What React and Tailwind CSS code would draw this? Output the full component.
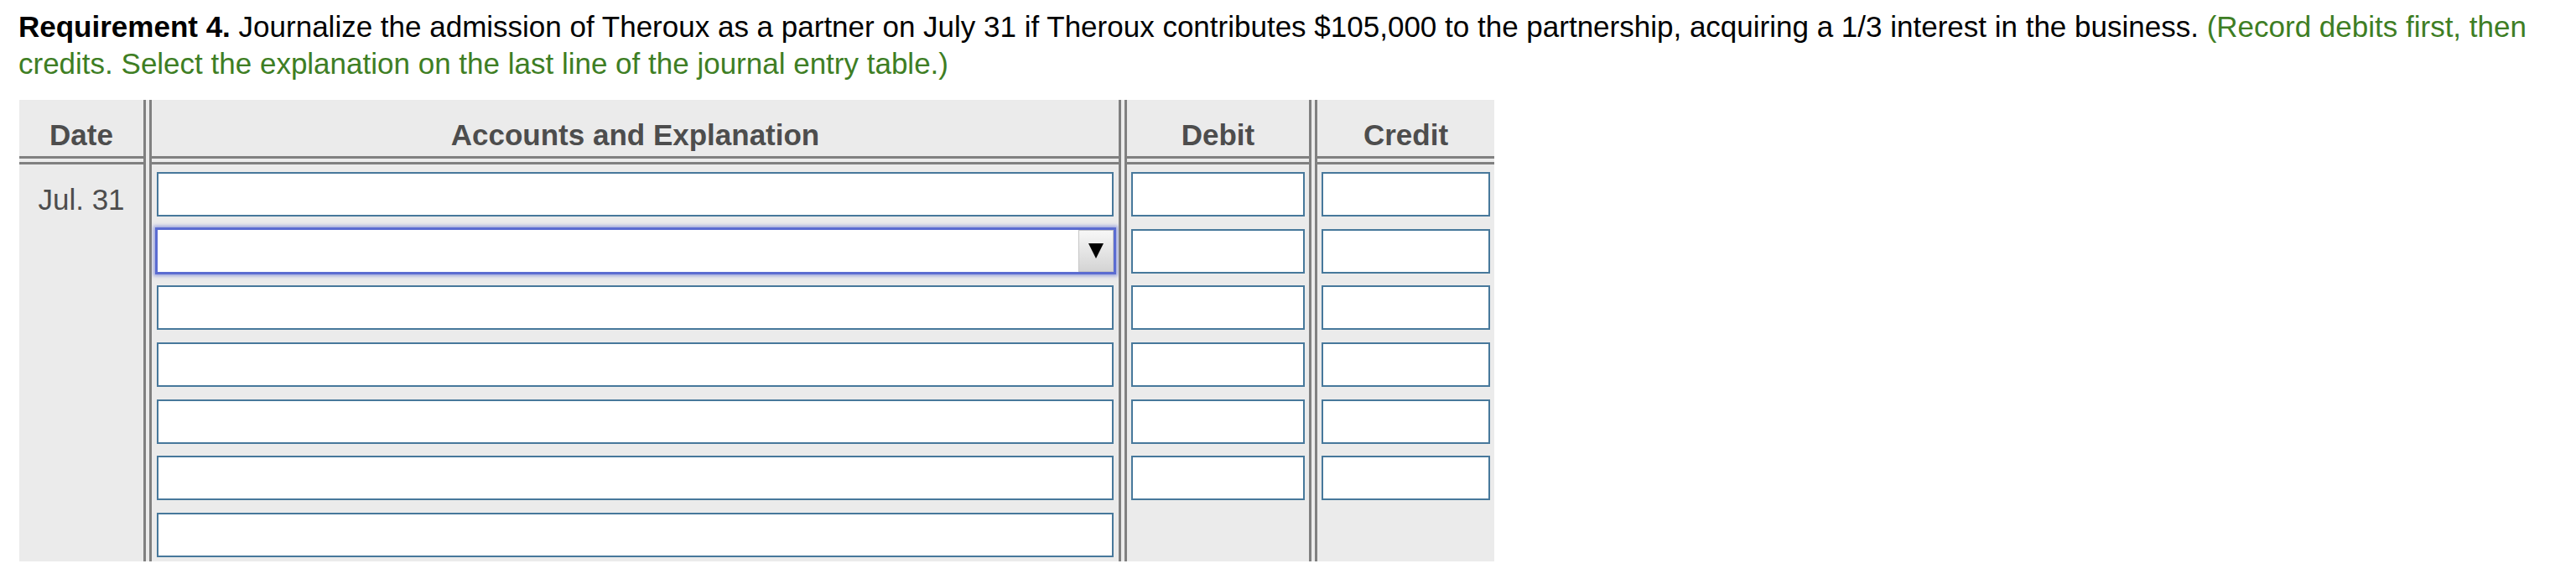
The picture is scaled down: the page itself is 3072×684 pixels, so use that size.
import { memo } from 'react';

/**
 * JournalEntry
 * Requirement prompt + journal entry table (date / accounts / debit / credit)
 */

const font = "font-['Liberation_Sans',Arial,Helvetica,sans-serif]";

// Double rule used under the header cells
const HeaderRule = () => (
  <div className="h-[10px] border-t-[3px] border-b-[3px] border-[#808080]" />
);

// Double vertical rule between columns
const ColumnRule = () => (
  <div className="flex w-[10px] shrink-0 self-stretch gap-[4px]">
    <div className="w-[3px] bg-[#808080]" />
    <div className="w-[3px] bg-[#808080]" />
  </div>
);

const HeaderCell = ({ children }) => (
  <div className="flex h-[67px] items-end justify-center pb-[6px] text-[35px] font-bold leading-[39px] text-[#4d4d4d]">
    {children}
  </div>
);

const TextBox = () => (
  <input
    type="text"
    defaultValue=""
    className="block h-[53px] w-full border-2 border-[#47789b] bg-white px-2 text-[30px] outline-none"
  />
);

// Account picker — focused state with the blue glow
const AccountSelect = () => (
  <div className="-mb-[1px] -ml-[2px] -mr-[3px] -mt-[2px] flex h-[56px] border-[3px] border-[#5b6cd1] bg-white shadow-[0_0_4px_2px_rgba(91,108,209,0.55)]">
    <div className="flex-1" />
    <div className="flex w-[42px] items-center justify-center border border-[#c6c6c6] bg-gradient-to-b from-[#f7f7f7] to-[#d4d4d4]">
      <svg width="18" height="18" viewBox="0 0 18 18">
        <polygon points="0,0 18,0 9,18" fill="#000" />
      </svg>
    </div>
  </div>
);

const App = memo(() => {
  const accountRows = [0, 1, 2, 3, 4, 5, 6];
  const amountRows = [0, 1, 2, 3, 4, 5];

  return (
    <div className={`min-h-[684px] w-[3072px] bg-white ${font}`}>
      {/* Prompt */}
      <p className="pl-[22px] pr-[16px] pt-[10px] text-[35px] leading-[44px] text-black">
        <span className="font-bold">Requirement 4.</span> Journalize the admission of Theroux as a partner on July 31 if
        Theroux contributes $105,000 to the partnership, acquiring a 1/3 interest in the business.{' '}
        <span className="text-[#3e7e24]">
          (Record debits first, then credits. Select the explanation on the last line of the journal entry table.)
        </span>
      </p>

      {/* Journal table */}
      <div className="ml-[23px] mt-[21px] flex w-[1759px] bg-[#ebebeb]">
        {/* Date */}
        <div className="flex w-[148px] flex-col">
          <HeaderCell>Date</HeaderCell>
          <HeaderRule />
          <div className="pt-[22px] text-center text-[35px] leading-[39px] text-[#4d4d4d]">Jul. 31</div>
        </div>

        <ColumnRule />

        {/* Accounts and Explanation */}
        <div className="flex w-[1153px] flex-col">
          <HeaderCell>Accounts and Explanation</HeaderCell>
          <HeaderRule />
          <div className="flex flex-col gap-[14.7px] px-[6px] pb-[5px] pt-[9px]">
            {accountRows.map((i) => (i === 1 ? <AccountSelect key={i} /> : <TextBox key={i} />))}
          </div>
        </div>

        <ColumnRule />

        {/* Debit */}
        <div className="flex w-[217px] flex-col">
          <HeaderCell>Debit</HeaderCell>
          <HeaderRule />
          <div className="flex flex-col gap-[14.7px] px-[5px] pt-[9px]">
            {amountRows.map((i) => (
              <TextBox key={i} />
            ))}
          </div>
        </div>

        <ColumnRule />

        {/* Credit */}
        <div className="flex w-[211px] flex-col">
          <HeaderCell>Credit</HeaderCell>
          <HeaderRule />
          <div className="flex flex-col gap-[14.7px] px-[5px] pt-[9px]">
            {amountRows.map((i) => (
              <TextBox key={i} />
            ))}
          </div>
        </div>
      </div>
    </div>
  );
});

App.displayName = 'App';

export default App;
